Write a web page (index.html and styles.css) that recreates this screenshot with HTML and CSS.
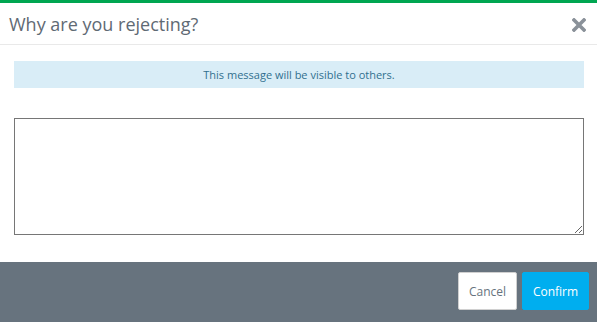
FILE: index.html
```html
<!DOCTYPE html>
<html>
<head>
<meta charset="utf-8">
<link rel="stylesheet" href="styles.css">
</head>
<body>
<div class="modal">
  <div class="modal-header">
    <h4 class="modal-title">Why are you rejecting?</h4>
    <button class="close" aria-label="Close">
      <svg width="14" height="14" viewBox="0 0 14 14"><path d="M2 2 L12 12 M12 2 L2 12" stroke="#8a9199" stroke-width="3.6" stroke-linecap="square"/></svg>
    </button>
  </div>
  <div class="modal-body">
    <div class="alert">This message will be visible to others.</div>
    <textarea class="reason"></textarea>
  </div>
  <div class="modal-footer">
    <button class="btn btn-cancel">Cancel</button>
    <button class="btn btn-confirm">Confirm</button>
  </div>
</div>
</body>
</html>
```
FILE: styles.css
```css
html, body {
  margin: 0;
  padding: 0;
  background: #fff;
  font-family: "Open Sans", "Liberation Sans", sans-serif;
}
.modal {
  width: 597px;
  height: 322px;
  display: flex;
  flex-direction: column;
  border-top: 3px solid #00a651;
  box-sizing: border-box;
}
.modal-header {
  height: 41px;
  border-bottom: 1px solid #e9e9e9;
  display: flex;
  align-items: center;
  justify-content: space-between;
  padding: 0 11px 0 9px;
}
.modal-title {
  margin: 0;
  font-size: 18px;
  font-weight: 400;
  color: #5f6a74;
  line-height: 24px;
  padding-top: 1px;
}
.close {
  border: 0;
  background: none;
  padding: 0;
  width: 14px;
  height: 14px;
  margin-top: 2px;
  display: flex;
}
.modal-body {
  padding: 16px 13px 27px 14px;
  display: flex;
  flex-direction: column;
  gap: 30px;
}
.alert {
  height: 27px;
  background: #d9edf7;
  color: #31708f;
  font-size: 11px;
  display: flex;
  align-items: center;
  justify-content: center;
}
.reason {
  width: 570px;
  height: 117px;
  box-sizing: border-box;
  border: 1px solid #767676;
  margin: 0;
  padding: 4px;
  font-family: inherit;
}
.modal-footer {
  flex: 1;
  background: #67737e;
  display: flex;
  justify-content: flex-end;
  align-items: flex-start;
  gap: 5px;
  padding: 10px 8px 0 0;
}
.btn {
  height: 38px;
  font-family: "Open Sans", "Liberation Sans", sans-serif;
  font-size: 12px;
  border-radius: 2px;
  cursor: pointer;
}
.btn-cancel {
  width: 59px;
  background: #fff;
  border: 1px solid #d0d0d0;
  color: #67737e;
}
.btn-confirm {
  width: 67px;
  background: #00aeef;
  border: 1px solid #00aeef;
  color: #fff;
}
```
